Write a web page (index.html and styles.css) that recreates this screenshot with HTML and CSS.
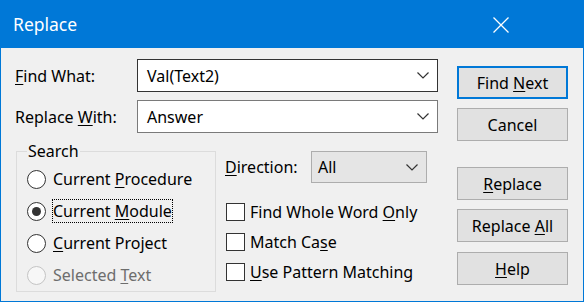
FILE: index.html
```html
<!DOCTYPE html>
<html>
<head>
<meta charset="utf-8">
<link rel="stylesheet" href="styles.css">
</head>
<body>
<div class="window">
  <div class="titlebar">
    <span class="title">Replace</span>
    <svg class="close" width="16" height="16" viewBox="0 0 16 16"><path d="M0.5 0.5 L15.5 15.5 M15.5 0.5 L0.5 15.5" stroke="#fff" stroke-width="1.3" fill="none"/></svg>
  </div>
  <div class="client">
    <div class="form">
      <div class="row">
        <span class="label"><u>F</u>ind What:</span>
        <div class="combo combo-focus"><span class="val">Val(Text2)</span><svg class="chev" width="12" height="7" viewBox="0 0 12 7"><path d="M0.5 0.5 L6 6 L11.5 0.5" stroke="#333" stroke-width="1.2" fill="none"/></svg></div>
      </div>
      <div class="row row2">
        <span class="label">Replace <u>W</u>ith:</span>
        <div class="combo"><span class="val">Answer</span><svg class="chev" width="12" height="7" viewBox="0 0 12 7"><path d="M0.5 0.5 L6 6 L11.5 0.5" stroke="#333" stroke-width="1.2" fill="none"/></svg></div>
      </div>
      <div class="lower">
        <fieldset class="group">
          <legend>Search</legend>
          <div class="opt"><span class="radio"></span><span>Current <u>P</u>rocedure</span></div>
          <div class="opt"><span class="radio checked"></span><span class="focus">Current <u>M</u>odule</span></div>
          <div class="opt"><span class="radio"></span><span><u>C</u>urrent Project</span></div>
          <div class="opt disabled"><span class="radio"></span><span>Selected <u>T</u>ext</span></div>
        </fieldset>
        <div class="opts">
          <div class="dirrow">
            <span class="dirlabel"><u>D</u>irection:</span>
            <div class="combo dircombo"><span class="val">All</span><svg class="chev" width="12" height="7" viewBox="0 0 12 7"><path d="M0.5 0.5 L6 6 L11.5 0.5" stroke="#333" stroke-width="1.2" fill="none"/></svg></div>
          </div>
          <div class="checks">
            <div class="chk"><span class="box"></span><span>Find Whole Word <u>O</u>nly</span></div>
            <div class="chk"><span class="box"></span><span>Match Ca<u>s</u>e</span></div>
            <div class="chk"><span class="box"></span><span><u>U</u>se Pattern Matching</span></div>
          </div>
        </div>
      </div>
    </div>
    <div class="buttons">
      <div class="btn default"><span>Find <u>N</u>ext</span></div>
      <div class="btn"><span>Cancel</span></div>
      <div class="btn gap"><span><u>R</u>eplace</span></div>
      <div class="btn"><span>Replace <u>A</u>ll</span></div>
      <div class="btn help"><span><u>H</u>elp</span></div>
    </div>
  </div>
</div>
</body>
</html>
```
FILE: styles.css
```css
html, body {
  margin: 0;
  padding: 0;
  width: 584px;
  height: 302px;
  overflow: hidden;
  background: #f0f0f0;
}
.window {
  box-sizing: border-box;
  width: 584px;
  height: 302px;
  border: 1px solid #0078d7;
  background: #f0f0f0;
  font-family: "Noto Sans", "Open Sans", sans-serif;
  font-size: 16px;
  color: #000;
}
.titlebar {
  height: 47px;
  background: #0078d7;
  display: flex;
  align-items: center;
  justify-content: space-between;
  padding: 0 74px 0 12px;
}
.title {
  color: #fff;
  font-size: 17.5px;
  padding-bottom: 2px;
}
.close {
  display: block;
  margin-top: 0;
}
.client {
  display: flex;
  padding: 11px 0 0 14px;
}
.form {
  width: 423px;
}
.row {
  display: flex;
  align-items: center;
  height: 33px;
}
.row2 {
  margin-top: 8px;
}
.label {
  width: 122px;
}
u {
  text-decoration-thickness: 1px;
  text-underline-offset: 2px;
}
.combo {
  box-sizing: border-box;
  width: 301px;
  height: 33px;
  background: #fff;
  border: 1px solid #7a7a7a;
  display: flex;
  align-items: center;
  justify-content: space-between;
  padding: 0 8px 0 9px;
}
.combo-focus {
  border-color: #333;
}
.chev {
  display: block;
}
.lower {
  display: flex;
  margin-top: 8px;
}
.group {
  box-sizing: border-box;
  width: 200px;
  height: 151px;
  margin: 0 0 0 1px;
  padding: 2px 0 0 10px;
  border: 1px solid #dcdcdc;
  min-width: 0;
}
.group legend {
  padding: 0 1px;
  margin-left: 0;
  line-height: 20px;
}
.opt {
  display: flex;
  align-items: center;
  height: 32px;
  gap: 7px;
  white-space: nowrap;
}
.radio {
  box-sizing: border-box;
  width: 19px;
  height: 19px;
  border: 1px solid #333;
  border-radius: 50%;
  background: #fff;
  display: flex;
  align-items: center;
  justify-content: center;
  flex: none;
}
.radio.checked::after {
  content: "";
  width: 9px;
  height: 9px;
  border-radius: 50%;
  background: #333;
}
.focus {
  outline: 1px dotted #000;
  outline-offset: 0;
}
.disabled {
  color: #6d6d6d;
}
.disabled .radio {
  border-color: #c4c4c4;
  background: #f7f7f7;
}
.opts {
  margin-left: 9px;
  padding-top: 10px;
}
.dirrow {
  display: flex;
  align-items: center;
  height: 32px;
}
.dirlabel {
  width: 86px;
}
.dircombo {
  width: 116px;
  height: 32px;
  background: #e5e5e5;
  border-color: #adadad;
  padding: 0 8px 0 6px;
}
.checks {
  margin-top: 14px;
  padding-left: 1px;
}
.chk {
  display: flex;
  align-items: center;
  height: 30px;
  gap: 5px;
  white-space: nowrap;
}
.box {
  box-sizing: border-box;
  width: 19px;
  height: 18px;
  border: 1px solid #333;
  background: #fff;
  flex: none;
}
.buttons {
  margin-left: 19px;
  padding-top: 7px;
  display: flex;
  flex-direction: column;
}
.btn {
  box-sizing: border-box;
  width: 111px;
  height: 33px;
  background: #e1e1e1;
  border: 1px solid #adadad;
  display: flex;
  align-items: center;
  justify-content: center;
  margin-bottom: 9px;
}
.btn.default {
  border: 2px solid #0078d7;
}
.btn.gap {
  margin-top: 17px;
}
.btn.help {
  margin-top: 1px;
}
```
